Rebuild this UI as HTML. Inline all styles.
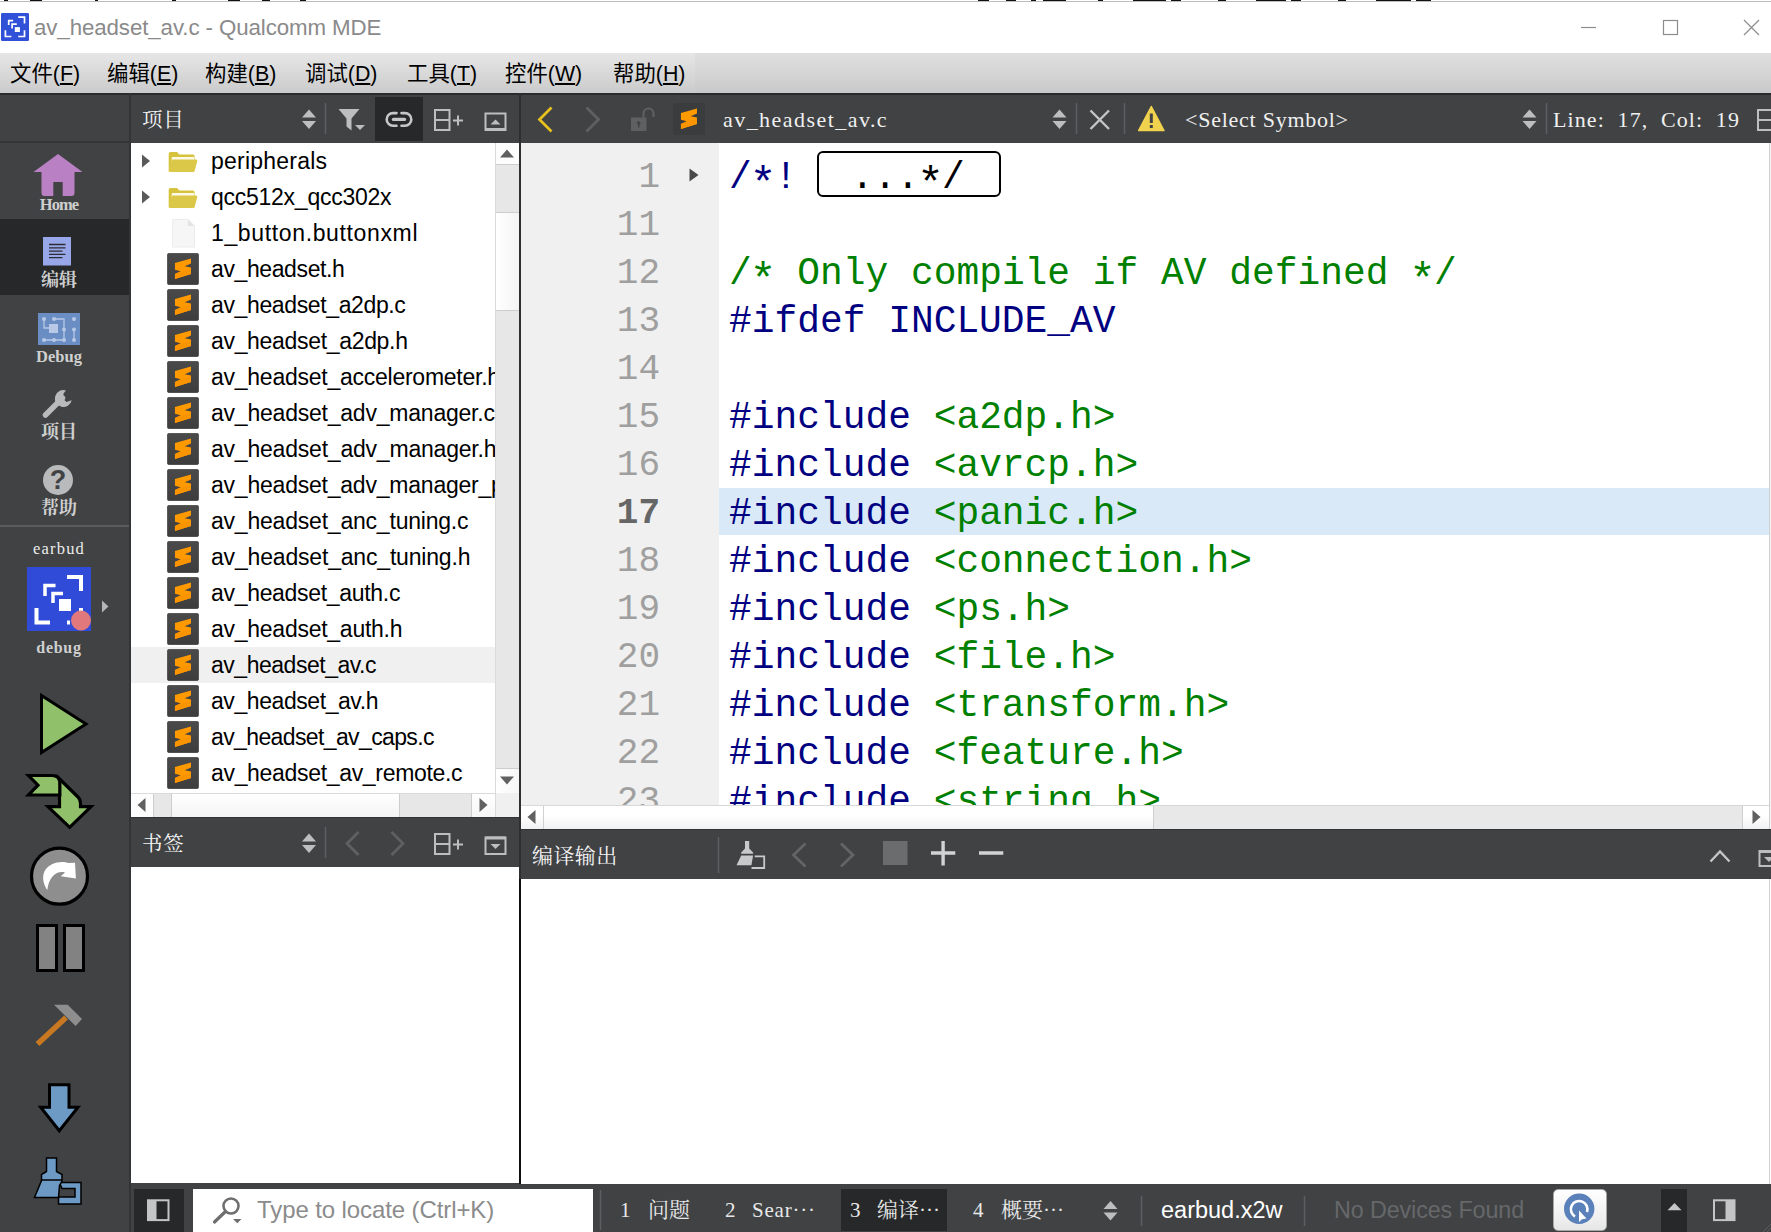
<!DOCTYPE html>
<html lang="zh-CN">
<head>
<meta charset="utf-8">
<title>av_headset_av.c - Qualcomm MDE</title>
<style>
*{box-sizing:border-box;margin:0;padding:0}
html,body{width:1771px;height:1232px;overflow:hidden;background:#fff}
body{position:relative;font-family:"Liberation Sans","Noto Sans CJK SC",sans-serif;color:#000}
.abs,.abs-all *{position:absolute}
#root{position:absolute;left:0;top:0;width:1771px;height:1232px;overflow:hidden}
#root div,#root span,#root svg{position:absolute}
.dark{background:#404244}
.sel{background:#262829}
.serif{font-family:"Liberation Serif","Noto Serif CJK SC",serif}
.cjkserif{font-family:"Liberation Serif","Noto Serif CJK SC",serif}
.nowrap{white-space:nowrap}
.sbl{left:0;width:118px;text-align:center;line-height:22px;color:#cfcfcf;white-space:nowrap}
.etxt{top:14px;font-size:22px;line-height:26px;color:#f0f0f0;white-space:nowrap}
.stx{top:11px;line-height:30px;color:#e8e8e8;white-space:nowrap}
.hdr{font-size:20.500px;line-height:26px;color:#f4f4f4;white-space:nowrap;letter-spacing:0.700px}
/* title */
#titlebar{left:0;top:0;width:1771px;height:53px;background:#fff}
#title{left:34px;top:14px;font-size:22.3px;line-height:28px;color:#8a8a8a;white-space:nowrap;letter-spacing:-0.1px}
/* menu */
#menubar{left:0;top:53px;width:1771px;height:40px;background:linear-gradient(#dfdfdf,#d6d6d6 45%,#c9c9c9)}
.menu{top:6px;font-size:21.4px;line-height:30px;white-space:nowrap;color:#000}
/* dark chrome */
#chrome{left:0;top:93px;width:1771px;height:1139px;background:#404244}
/* tree */
#tree{left:131px;top:143px;width:364px;height:650px;background:#fff;overflow:hidden}
.row{left:0;width:364px;height:36px}
.row .t{left:80px;top:3px;font-size:23px;line-height:30px;white-space:nowrap;color:#000}
/* editor */
#gutter{left:521px;top:143px;width:198px;height:662px;background:#f0f0f0;overflow:hidden}
#code{left:719px;top:143px;width:1050px;height:662px;background:#fff;overflow:hidden}
.ln{right:59px;width:120px;text-align:right;font-family:"Liberation Mono",monospace;font-size:36px;line-height:48px;height:48px;color:#9f9f9f;white-space:nowrap}
.cl{left:10px;font-family:"Liberation Mono",monospace;font-size:37.9px;line-height:48px;height:48px;white-space:pre;color:#000080}
.g{color:#008000;position:static!important}
.ast{position:relative!important;top:9.500px;left:-2.200px;font-size:45px;line-height:0;letter-spacing:-4.270px}
</style>
</head>
<body>
<div id="root">
<svg width="0" height="0" style="left:0;top:0"><defs>
 <g id="updown"><path d="M0 8.500h14l-7-8z" fill="#bdbebf"/><path d="M0 12h14l-7 8z" fill="#bdbebf"/></g>
 <g id="split" fill="none" stroke="#bdbebf" stroke-width="2"><rect x="1" y="1" width="14.500" height="20"/><path d="M1 11h14.500"/><path d="M19 11.500h10M24 6.500v10"/></g>
 <g id="folder"><path d="M1.700 3.600a1.500 1.500 0 0 1 1.500-1.500h6.800l2.400 2.400h13.600a1.500 1.500 0 0 1 1.500 1.500v14.500H1.700z" fill="#d6c23c"/><path d="M5 7h22v6H4z" fill="#fdfbe8"/><path d="M5.800 9.600h23.300a1.200 1.200 0 0 1 1.200 1.500l-2.600 9.700a1.600 1.600 0 0 1-1.500 1.200H3a1.300 1.300 0 0 1-1.300-1.700l2.600-9.500a1.600 1.600 0 0 1 1.500-1.200z" fill="#dcc848"/></g>
 <g id="fileic"><path d="M0.500 0.500h15.500l6.500 6.500v21H0.500z" fill="#f6f6f6" stroke="#ececec"/><path d="M16 0.500v6.500h6.500z" fill="#e3e3e3"/></g>
 <g id="sshape"><path d="M24 5.500L7.950 9.900V16.700L13.800 18.350 7.950 20.900V26L24 21.100V14.600L17.700 13.300 24 10.550z" fill="#ff9900"/><path d="M13.800 18.350L24 16.200v4.900L7.950 26V20.900z" fill="#fa9400"/></g>
 <linearGradient id="sbg" x1="0" y1="0" x2="0" y2="1"><stop offset="0" stop-color="#4a4a4a"/><stop offset="1" stop-color="#3d3d3d"/></linearGradient>
 <g id="sic"><rect x="0.300" y="0.300" width="31.400" height="31.400" rx="2" fill="url(#sbg)" stroke="#383838" stroke-width="0.600"/><use href="#sshape"/></g>
</defs></svg>
<!-- TITLEBAR -->
<div id="titlebar">
 <div style="left:0;top:1px;width:1771px;height:1px;background:#bdbdbd"></div>
 <div style="left:978px;top:0;width:11px;height:1.300px;background:#111"></div><div style="left:1006px;top:0;width:10px;height:1.300px;background:#111"></div><div style="left:1031px;top:0;width:5px;height:1.300px;background:#111"></div><div style="left:1043px;top:0;width:23px;height:1.300px;background:#111"></div><div style="left:1098px;top:0;width:5px;height:1.300px;background:#111"></div><div style="left:1133px;top:0;width:33px;height:1.300px;background:#111"></div><div style="left:1171px;top:0;width:10px;height:1.300px;background:#111"></div><div style="left:1218px;top:0;width:8px;height:1.300px;background:#111"></div><div style="left:1256px;top:0;width:30px;height:1.300px;background:#111"></div><div style="left:1291px;top:0;width:10px;height:1.300px;background:#111"></div><div style="left:1338px;top:0;width:8px;height:1.300px;background:#111"></div><div style="left:1376px;top:0;width:35px;height:1.300px;background:#111"></div><div style="left:1416px;top:0;width:15px;height:1.300px;background:#111"></div><div style="left:4px;top:0;width:4px;height:1.300px;background:#111"></div><div style="left:30px;top:0;width:12px;height:1.300px;background:#111"></div><div style="left:95px;top:0;width:3px;height:1.300px;background:#111"></div><div style="left:172px;top:0;width:4px;height:1.300px;background:#111"></div><div style="left:228px;top:0;width:12px;height:1.300px;background:#111"></div><div style="left:262px;top:0;width:8px;height:1.300px;background:#111"></div><div style="left:300px;top:0;width:6px;height:1.300px;background:#111"></div>
 <svg style="left:1px;top:13px" width="28" height="28" viewBox="0 0 28 28"><rect width="28" height="28" rx="1.300" fill="#3050d8"/><g fill="none" stroke="#fff" stroke-width="1.700"><path d="M17.200 4.200H23.500V10.500M4.400 17.300V23.500H10.400M23.500 17.300V23.500H17.200M7.700 11.900V7.700H12.100M11.100 15.600V11.100H15.800"/></g><rect x="13.800" y="14.100" width="5.100" height="4.900" fill="#fff"/></svg>
 <div id="title">av_headset_av.c - Qualcomm MDE</div>
 <svg style="left:1580px;top:18px" width="180" height="20" viewBox="0 0 180 20"><g fill="none" stroke="#8c8c8c" stroke-width="1.2"><path d="M1 9.500h15"/><rect x="83.500" y="2.500" width="14" height="14"/><path d="M164 2l15 15M179 2l-15 15"/></g></svg>
</div>
<!-- MENUBAR -->
<div id="menubar">
 <div style="left:0;top:0;width:695px;height:40px;background:linear-gradient(#e6e6e6,#dadada 45%,#cbcbcb)"></div>
 <div class="menu" style="left:10px">文件(<u>F</u>)</div>
 <div class="menu" style="left:107px">编辑(<u>E</u>)</div>
 <div class="menu" style="left:205px">构建(<u>B</u>)</div>
 <div class="menu" style="left:305px">调试(<u>D</u>)</div>
 <div class="menu" style="left:407px">工具(<u>T</u>)</div>
 <div class="menu" style="left:505px">控件(<u>W</u>)</div>
 <div class="menu" style="left:613px">帮助(<u>H</u>)</div>
</div>
<!-- CHROME -->
<div id="chrome"></div>
<div style="left:0;top:93px;width:1771px;height:1.500px;background:#2a2b2d"></div>
<!-- SIDEBAR -->
<div id="sidebar" style="left:0;top:93px;width:129px;height:1139px">
 <div style="left:0;top:48px;width:129px;height:2px;background:#333537"></div>
 <div class="sel" style="left:0;top:126px;width:129px;height:76px"></div>
 <div style="left:0;top:432px;width:129px;height:2px;background:#5a5c5e"></div>
 <svg style="left:0;top:0" width="129" height="1139" viewBox="0 93 129 1139">
  <!-- home -->
  <path d="M58 154L82.500 172H74.500V193a3 3 0 0 1-3 3H62.700V182H53.300V196H44.500a3 3 0 0 1-3-3V172H33.500z" fill="#b981c4"/>
  <!-- edit -->
  <rect x="43" y="237" width="28" height="28.500" fill="#98a7ea"/>
  <path d="M49 244.500h16.500M49 247.800h16.500M49 251.100h13.500M49 254.400h16.500M49 257.700h13.500" stroke="#2c2d30" stroke-width="1.300"/>
  <!-- debug -->
  <rect x="38" y="313" width="42" height="32" fill="#6a8dc4"/>
  <g stroke="#b7c9e6" stroke-width="1.300" fill="none"><path d="M44 319v9h7M54 319h10v21H44M74 319v2M74 330v10"/></g>
  <rect x="49" y="324" width="9" height="9" fill="#b7c9e6"/>
  <g fill="#b7c9e6"><circle cx="44" cy="319" r="2"/><circle cx="54" cy="319" r="2"/><circle cx="74" cy="319" r="2"/><circle cx="64" cy="329.500" r="2"/><circle cx="74" cy="329.500" r="2"/><circle cx="44" cy="340" r="2"/><circle cx="54" cy="340" r="2"/><circle cx="64" cy="340" r="2"/><circle cx="74" cy="340" r="2"/></g>
  <!-- wrench -->
  <path d="M45.500 415l17-17" stroke="#b9babb" stroke-width="5.500" stroke-linecap="round"/>
  <path d="M66 390.500a8.500 8.500 0 1 0 5.700 9.800l-5.200 1.700-3.800-3.600 1-5.200z" fill="#b9babb"/>
  <!-- help -->
  <circle cx="58" cy="480" r="15" fill="#b9babb"/>
  <!-- kit icon -->
  <rect x="27" y="567" width="64" height="64" fill="#2f4bd8"/>
  <g fill="none" stroke="#fff" stroke-width="4"><path d="M67 577h14v14M50 622.500H36.500V608M81 608v4M70 622.500h-3"/><path d="M45 596V585.500h10.500" stroke-width="3.500"/><path d="M53 603V593.500h10" stroke-width="3.500"/></g>
  <rect x="59" y="599" width="12" height="12" fill="#fff"/>
  <circle cx="81" cy="620.500" r="10" fill="#e0787c"/>
  <path d="M102 600.500v12l6.500-6z" fill="#b4b5b6"/>
  <!-- run -->
  <path d="M41.500 695.500L86 724 41.500 752.500z" fill="#90c06a" stroke="#000" stroke-width="3" stroke-linejoin="miter"/>
  <!-- debug run -->
  <path d="M56 775.500L78 797c2 2 2.500 3.500 2.500 6v3.700H91L69.700 827.300 48 806.700H59.500V782z" fill="#90c06a" stroke="#000" stroke-width="3.200" stroke-linejoin="miter"/>
  <path d="M28.500 775.500H52Q59.800 775.500 59.800 783.500V795H28.500L38 785.200z" fill="#90c06a" stroke="#000" stroke-width="3.200" stroke-linejoin="miter"/>
  <!-- restart -->
  <circle cx="59.500" cy="876.200" r="28" fill="#8e8e8e" stroke="#000" stroke-width="3.200"/>
  <path d="M47.300 890C40 879 42 866 57 862.500c4.500-1 8.500-.500 11 .500l7-.200.900 15.600-15.200-2.200 4.300-3.700C57 870.500 49 876 47.300 890z" fill="#fff"/>
  <!-- pause -->
  <rect x="37.500" y="925.500" width="19" height="45" fill="#828282" stroke="#000" stroke-width="3"/>
  <rect x="64.500" y="925.500" width="19" height="45" fill="#828282" stroke="#000" stroke-width="3"/>
  <!-- hammer -->
  <path d="M37.500 1044L66 1017.500" stroke="#c87820" stroke-width="5.500"/>
  <path d="M54 1004.700H67.700L82 1019l-6.400 7z" fill="#8e8e8e"/>
  <!-- download -->
  <path d="M49.500 1084.800H69v22.500H78l-18.700 23.500L40.700 1107.300H49.500z" fill="#6c9ac4" stroke="#000" stroke-width="3" stroke-linejoin="miter"/>
  <!-- clean -->
  <path d="M59.500 1182.500H81v21.500H58.500v-7H75v-8.500H62z" fill="#6c9ac4" stroke="#000" stroke-width="1.500"/>
  <path d="M46.500 1158h10v13.500l5.500 3v6.500l-2.500 4.500-1 12H34.500l7-17v-6l5-3z" fill="#6c9ac4" stroke="#000" stroke-width="1.500"/>
  <path d="M41.500 1180h20.500" stroke="#000" stroke-width="1.500"/>
 </svg>
 <div class="serif sbl" style="top:100.500px;font-weight:bold;font-size:16.500px;letter-spacing:-0.900px">Home</div>
 <div class="cjkserif sbl" style="top:175.500px;font-weight:bold;font-size:18px">编辑</div>
 <div class="serif sbl" style="top:252.500px;font-weight:bold;font-size:16.500px;letter-spacing:0">Debug</div>
 <div class="cjkserif sbl" style="top:327.500px;font-weight:bold;font-size:18px">项目</div>
 <div class="cjkserif sbl" style="top:403.500px;font-weight:bold;font-size:18px">帮助</div>
 <div class="sbl" style="top:371px;left:-1px;font-weight:bold;font-size:27px;color:#404244;line-height:32px">?</div>
 <div class="serif sbl" style="top:444.700px;font-size:16.500px;letter-spacing:1.200px;color:#ececec">earbud</div>
 <div class="serif sbl" style="top:544px;font-weight:bold;font-size:16px;letter-spacing:0.700px">debug</div>
</div>
<!-- PROJECT PANEL -->
<div id="projhead" style="left:131px;top:93px;width:388px;height:50px">
 <div class="cjkserif hdr" style="left:11px;top:14px">项目</div>
 <div class="sel" style="left:244px;top:4px;width:48px;height:44px"></div>
 <svg style="left:0;top:0" width="388" height="50" viewBox="0 0 388 50"><use href="#updown" x="171" y="16"/><path d="M194.500 10v31" stroke="#5c5e60" stroke-width="1.5"/><path d="M207.500 16h21l-8 9.500v12l-5-4v-8z" fill="#bdbebf"/><path d="M224 32h10l-5 5z" fill="#bdbebf"/><g fill="none" stroke="#c6c7c8" stroke-width="2.600" stroke-linecap="round"><path d="M265.500 20.100h-3.500a6.300 6.300 0 0 0 0 12.600h3.500M270.500 20.100h3.500a6.300 6.300 0 0 1 0 12.600h-3.500"/><path d="M262.500 26.400h11" stroke-width="3.400"/></g><use href="#split" x="303" y="16"/><g fill="none" stroke="#bdbebf" stroke-width="2"><rect x="354.500" y="20.500" width="20" height="16.500"/><path d="M354.500 36.500h20" stroke-width="3"/></g><path d="M359.500 31.500h10l-5-5z" fill="#bdbebf"/></svg>
</div>
<div id="tree">
 <div class="row" style="top:0px"><svg style="left:10px;top:11px" width="10" height="14"><path d="M1 0.500l8 6.500-8 6.500z" fill="#5a5a5a"/></svg><svg style="left:36px;top:7px" width="32" height="24"><use href="#folder"/></svg><div class="t" style="letter-spacing:0.22px">peripherals</div></div>
 <div class="row" style="top:36px"><svg style="left:10px;top:11px" width="10" height="14"><path d="M1 0.500l8 6.500-8 6.500z" fill="#5a5a5a"/></svg><svg style="left:36px;top:7px" width="32" height="24"><use href="#folder"/></svg><div class="t" style="letter-spacing:-0.26px">qcc512x_qcc302x</div></div>
 <div class="row" style="top:72px"><svg style="left:41px;top:4px" width="24" height="29"><use href="#fileic"/></svg><div class="t" style="letter-spacing:0.64px">1_button.buttonxml</div></div>
 <div class="row" style="top:108px"><svg style="left:36px;top:2px" width="32" height="32"><use href="#sic"/></svg><div class="t" style="letter-spacing:-0.39px">av_headset.h</div></div>
 <div class="row" style="top:144px"><svg style="left:36px;top:2px" width="32" height="32"><use href="#sic"/></svg><div class="t" style="letter-spacing:-0.37px">av_headset_a2dp.c</div></div>
 <div class="row" style="top:180px"><svg style="left:36px;top:2px" width="32" height="32"><use href="#sic"/></svg><div class="t" style="letter-spacing:-0.32px">av_headset_a2dp.h</div></div>
 <div class="row" style="top:216px"><svg style="left:36px;top:2px" width="32" height="32"><use href="#sic"/></svg><div class="t" style="letter-spacing:-0.25px">av_headset_accelerometer.h</div></div>
 <div class="row" style="top:252px"><svg style="left:36px;top:2px" width="32" height="32"><use href="#sic"/></svg><div class="t" style="letter-spacing:-0.22px">av_headset_adv_manager.c</div></div>
 <div class="row" style="top:288px"><svg style="left:36px;top:2px" width="32" height="32"><use href="#sic"/></svg><div class="t" style="letter-spacing:-0.21px">av_headset_adv_manager.h</div></div>
 <div class="row" style="top:324px"><svg style="left:36px;top:2px" width="32" height="32"><use href="#sic"/></svg><div class="t" style="letter-spacing:-0.22px">av_headset_adv_manager_private.h</div></div>
 <div class="row" style="top:360px"><svg style="left:36px;top:2px" width="32" height="32"><use href="#sic"/></svg><div class="t" style="letter-spacing:-0.21px">av_headset_anc_tuning.c</div></div>
 <div class="row" style="top:396px"><svg style="left:36px;top:2px" width="32" height="32"><use href="#sic"/></svg><div class="t" style="letter-spacing:-0.18px">av_headset_anc_tuning.h</div></div>
 <div class="row" style="top:432px"><svg style="left:36px;top:2px" width="32" height="32"><use href="#sic"/></svg><div class="t" style="letter-spacing:-0.31px">av_headset_auth.c</div></div>
 <div class="row" style="top:468px"><svg style="left:36px;top:2px" width="32" height="32"><use href="#sic"/></svg><div class="t" style="letter-spacing:-0.26px">av_headset_auth.h</div></div>
 <div class="row" style="top:504px;background:#f0f0f0"><svg style="left:36px;top:2px" width="32" height="32"><use href="#sic"/></svg><div class="t" style="letter-spacing:-0.48px">av_headset_av.c</div></div>
 <div class="row" style="top:540px"><svg style="left:36px;top:2px" width="32" height="32"><use href="#sic"/></svg><div class="t" style="letter-spacing:-0.43px">av_headset_av.h</div></div>
 <div class="row" style="top:576px"><svg style="left:36px;top:2px" width="32" height="32"><use href="#sic"/></svg><div class="t" style="letter-spacing:-0.62px">av_headset_av_caps.c</div></div>
 <div class="row" style="top:612px"><svg style="left:36px;top:2px" width="32" height="32"><use href="#sic"/></svg><div class="t" style="letter-spacing:-0.32px">av_headset_av_remote.c</div></div>
</div>
<div id="vsb" style="left:495px;top:143px;width:24px;height:650px;background:#e7e7e7;border-left:1px solid #dadada">
 <div style="left:0;top:0;width:23px;height:21px;background:#fdfdfd"></div><svg style="left:4px;top:6px" width="14" height="9"><path d="M0 8.500h14l-7-8z" fill="#606060"/></svg>
 <div style="left:0;top:21px;width:23px;height:1px;background:#cdcdcd"></div>
 <div style="left:0;top:69px;width:23px;height:99px;background:linear-gradient(90deg,#ffffff,#f4f4f4);border-top:1px solid #cdcdcd;border-bottom:1px solid #cdcdcd"></div>
 <div style="left:0;top:625px;width:23px;height:25px;background:linear-gradient(90deg,#ffffff,#f6f6f6);border-top:1px solid #cdcdcd"></div><svg style="left:4px;top:633px" width="14" height="9"><path d="M0 0.500h14l-7 8z" fill="#606060"/></svg>
</div>
<div id="hsb" style="left:131px;top:793px;width:388px;height:24px;background:#e7e7e7;border-top:1px solid #dadada">
 <div style="left:0;top:0;width:22px;height:23px;background:#fdfdfd"></div>
 <svg style="left:6px;top:4px" width="9" height="14"><path d="M8.500 0v14l-8-7z" fill="#606060"/></svg>
 <div style="left:22px;top:0;width:1px;height:23px;background:#cdcdcd"></div>
 <div style="left:40px;top:0;width:229px;height:23px;background:linear-gradient(#ffffff,#f4f4f4);border-left:1px solid #cdcdcd;border-right:1px solid #cdcdcd"></div>
 <div style="left:340px;top:0;width:24px;height:23px;background:linear-gradient(#ffffff,#f6f6f6);border-left:1px solid #cdcdcd"></div>
 <svg style="left:348px;top:4px" width="9" height="14"><path d="M0.500 0v14l8-7z" fill="#606060"/></svg>
 <div style="left:364px;top:-1px;width:24px;height:24px;background:#f0f0f0;border-left:1px solid #dadada"></div>
</div>
<div id="bmhead" style="left:131px;top:819px;width:388px;height:48px">
 <div class="cjkserif hdr" style="left:11px;top:12px">书签</div>
 <svg style="left:0;top:0" width="388" height="48" viewBox="0 0 388 48"><use href="#updown" x="171" y="14"/><path d="M194.500 8v31" stroke="#5c5e60" stroke-width="1.500"/><g fill="none" stroke="#5e6062" stroke-width="2.800"><path d="M227.500 13l-11.500 11.500 11.500 11.500M260.500 13l11.500 11.500-11.500 11.500"/></g><use href="#split" x="303" y="14"/><g fill="none" stroke="#bdbebf" stroke-width="2"><rect x="354.500" y="18.500" width="20" height="16.500"/><path d="M354.500 19h20" stroke-width="3"/></g><path d="M359.500 25h10l-5 5z" fill="#bdbebf"/></svg>
</div>
<div id="bm" style="left:131px;top:867px;width:388px;height:316px;background:#fff"></div>
<div style="left:129px;top:93px;width:2px;height:1139px;background:#333436"></div>
<div style="left:519px;top:93px;width:2px;height:1091px;background:#2e2f31"></div>
<div style="left:131px;top:817px;width:388px;height:1px;background:#323335"></div>
<div style="left:521px;top:829px;width:1250px;height:1px;background:#323335"></div>
<!-- EDITOR -->
<div id="edhead" style="left:521px;top:93px;width:1250px;height:50px">
 <div style="left:152px;top:10px;width:32px;height:32px;background:#3b3c3e;border-radius:3px"></div>
 <svg style="left:0;top:0" width="1250" height="50" viewBox="521 93 1250 50"><g fill="none" stroke-width="2.800"><path d="M551.500 107.500L539.500 119.500l12 12" stroke="#e8c21c"/><path d="M586.500 107.500l12 12-12 12" stroke="#5e6062"/></g><rect x="631" y="117.500" width="15.500" height="13.500" fill="#5e6062"/><path d="M643.500 117.500v-4a5 5 0 0 1 10 0v3.500" fill="none" stroke="#5e6062" stroke-width="2.200"/><circle cx="638.700" cy="123" r="1.800" fill="#404244"/><rect x="638" y="123" width="1.500" height="4.500" fill="#404244"/><use href="#sshape" x="673" y="103"/><use href="#updown" x="1052.500" y="109"/><path d="M1076.500 103v31M1124.500 103v31M1546.500 103v31" stroke="#5c5e60" stroke-width="1.500"/><path d="M1090.500 110.500l18.500 18.500M1109 110.500l-18.500 18.500" stroke="#c4c5c6" stroke-width="2.400"/><path d="M1151.300 106.500L1164 130.500H1138.600z" fill="#f0d24e" stroke="#f0d24e" stroke-width="1.500" stroke-linejoin="round"/><rect x="1149.800" y="113.500" width="3" height="9.500" fill="#404244"/><rect x="1149.800" y="125" width="3" height="3" fill="#404244"/><use href="#updown" x="1522.500" y="109"/><g fill="none" stroke="#bdbebf" stroke-width="2"><rect x="1758" y="110" width="16" height="20"/><path d="M1758 120h16"/></g></svg>
 <div class="serif etxt" style="left:202px;letter-spacing:1.450px">av_headset_av.c</div>
 <div class="serif etxt" style="left:664px;letter-spacing:0.750px">&lt;Select Symbol&gt;</div>
 <div class="serif etxt" style="left:1032px;letter-spacing:1.100px;word-spacing:6px">Line: 17, Col: 19</div>
</div>
<div id="gutter">
 <div class="ln" style="top:10.7px">1</div>
 <div class="ln" style="top:58.7px">11</div>
 <div class="ln" style="top:106.7px">12</div>
 <div class="ln" style="top:154.7px">13</div>
 <div class="ln" style="top:202.7px">14</div>
 <div class="ln" style="top:250.7px">15</div>
 <div class="ln" style="top:298.7px">16</div>
 <div class="ln" style="top:346.7px;color:#666;font-weight:bold">17</div>
 <div class="ln" style="top:394.7px">18</div>
 <div class="ln" style="top:442.7px">19</div>
 <div class="ln" style="top:490.7px">20</div>
 <div class="ln" style="top:538.7px">21</div>
 <div class="ln" style="top:586.7px">22</div>
 <div class="ln" style="top:634.7px">23</div>
 <svg style="left:168px;top:25px" width="10" height="14"><path d="M0.500 0.500v13l9-6.500z" fill="#4a4a4a"/></svg>
</div>
<div id="code">
 <div style="left:0;top:344.500px;width:1050px;height:47px;background:#d9e9f7"></div>
 <div class="cl" style="top:10.7px">/<span class="ast">*</span>! </div>
 <div class="cl" style="top:106.7px"><span class="g">/<span class="ast">*</span> Only compile if AV defined <span class="ast">*</span>/</span></div>
 <div class="cl" style="top:154.7px">#ifdef INCLUDE_AV</div>
 <div class="cl" style="top:250.7px">#include <span class="g">&lt;a2dp.h&gt;</span></div>
 <div class="cl" style="top:298.7px">#include <span class="g">&lt;avrcp.h&gt;</span></div>
 <div class="cl" style="top:346.7px">#include <span class="g">&lt;panic.h&gt;</span></div>
 <div class="cl" style="top:394.7px">#include <span class="g">&lt;connection.h&gt;</span></div>
 <div class="cl" style="top:442.7px">#include <span class="g">&lt;ps.h&gt;</span></div>
 <div class="cl" style="top:490.7px">#include <span class="g">&lt;file.h&gt;</span></div>
 <div class="cl" style="top:538.7px">#include <span class="g">&lt;transform.h&gt;</span></div>
 <div class="cl" style="top:586.7px">#include <span class="g">&lt;feature.h&gt;</span></div>
 <div class="cl" style="top:634.7px">#include <span class="g">&lt;string.h&gt;</span></div>
 <div style="left:98px;top:8px;width:184px;height:46px;border:2px solid #000;border-radius:6px"></div>
 <div class="cl" style="left:132px;top:10.7px;color:#000">...<span class="ast">*</span>/</div>
</div>
<div style="left:1769px;top:143px;width:2px;height:686px;background:#f4f4f4;border-left:1px solid #d0d0d0"></div>
<div id="ehsb" style="left:521px;top:805px;width:1248px;height:24px;background:linear-gradient(#ffffff,#ffffff 40%,#f1f1f1);border-top:1px solid #d8d8d8">
 <svg style="left:5.500px;top:4px" width="9" height="14"><path d="M8.500 0v14l-8-7z" fill="#606060"/></svg>
 <div style="left:22px;top:0;width:1px;height:23px;background:#d0d0d0"></div>
 <div style="left:632px;top:0;width:590px;height:23px;background:#e8e8e8;border-left:1px solid #cfcfcf;border-right:1px solid #cfcfcf"></div>
 <svg style="left:1231px;top:4px" width="9" height="14"><path d="M0.500 0v14l8-7z" fill="#606060"/></svg>
</div>
<!-- OUTPUT -->
<div id="outhead" style="left:521px;top:829px;width:1250px;height:50px">
 <div class="cjkserif hdr" style="left:11px;top:14px;letter-spacing:0.400px;font-size:21px">编译输出</div>
 <svg style="left:0;top:0" width="1250" height="50" viewBox="521 829 1250 50"><path d="M718.500 837v36" stroke="#5c5e60" stroke-width="1.500"/><path d="M745 841h4.200v7.600l3.900 3.800v1.300H741.200v-1.300l3.800-3.800z" fill="#c8c9ca"/><path d="M741.200 855.500h11.900l-1.700 9.700H736.500z" fill="#c8c9ca"/><path d="M754.700 856.300h9.500v11.700h-12.700" fill="none" stroke="#c8c9ca" stroke-width="1.800"/><g fill="none" stroke="#626466" stroke-width="2.800"><path d="M805.500 843.500L793.500 855l12 11.500M841 843.500l12 11.500-12 11.500"/></g><rect x="883" y="841" width="24.500" height="24" fill="#6b6c6e"/><path d="M931 853h24.300M943.100 841v24.500M979 853h24.300" stroke="#d2d3d4" stroke-width="3.400"/><path d="M1710.500 861.500l9.500-10 9.500 10" fill="none" stroke="#c4c5c6" stroke-width="2.400"/><g fill="none" stroke="#bdbebf" stroke-width="2"><rect x="1759.500" y="851" width="20" height="15"/><path d="M1759.500 851.500h20" stroke-width="3"/></g><path d="M1764 857h10l-5 5z" fill="#bdbebf"/></svg>
</div>
<div id="outbody" style="left:521px;top:879px;width:1248px;height:305px;background:#fff"></div>
<div style="left:1769px;top:879px;width:2px;height:305px;background:#fff;border-left:1px solid #d0d0d0"></div>
<div style="left:519px;top:879px;width:2px;height:305px;background:#101010"></div>
<!-- STATUSBAR -->
<div id="status" style="left:131px;top:1184px;width:1640px;height:48px">
 <div class="sel" style="left:3px;top:5px;width:50px;height:43px"></div>
 <div style="left:62px;top:5px;width:400px;height:43px;background:#fff"></div>
 <div class="sel" style="left:710px;top:5px;width:106px;height:42px"></div>
 <div class="sel" style="left:1530px;top:5px;width:26px;height:42.500px"></div>
 <div style="left:1422px;top:5px;width:54px;height:42px;border:1.500px solid #a8a8a8;border-radius:5px;background:linear-gradient(#ffffff,#f2f2f2 60%,#e6e6e6)"></div>
 <svg style="left:0;top:0" width="1640" height="48" viewBox="131 1184 1640 48"><rect x="148" y="1200.300" width="20.500" height="19.800" fill="none" stroke="#c4c5c6" stroke-width="2"/><rect x="148" y="1200.300" width="8.500" height="19.800" fill="#c4c5c6"/><circle cx="231" cy="1206" r="7.500" fill="none" stroke="#6e6e6e" stroke-width="2.600"/><path d="M225.500 1211.500l-11 10.500" stroke="#6e6e6e" stroke-width="3.200" stroke-linecap="round"/><path d="M233 1219h8.500l-4.200 4.200z" fill="#6e6e6e"/><path d="M600.500 1190v40M1141.500 1196v30M1304.500 1196v30" stroke="#5c5e60" stroke-width="1.500"/><use href="#updown" x="1103.500" y="1200.500"/><circle cx="1579.200" cy="1208.800" r="15.200" fill="#5b81ba"/><path d="M1575 1216.500a8.300 8.300 0 1 1 12-4.500" fill="none" stroke="#fff" stroke-width="2.600"/><path d="M1579 1210.500v11.500l3-2.700 4.500-.800z" fill="#fff"/><path d="M1667.500 1210.300h14l-7-7.400z" fill="#c6c7c8"/><path d="M1771 1224l-8 8M1771 1228l-4 4" stroke="#5a5c5e" stroke-width="1"/><rect x="1714" y="1200.300" width="20.500" height="19.800" fill="none" stroke="#c4c5c6" stroke-width="2"/><rect x="1725.500" y="1200.300" width="9" height="19.800" fill="#c4c5c6"/></svg>
 <div class="stx" style="left:126px;color:#8c8c8c;font-size:24px;letter-spacing:-0.100px">Type to locate (Ctrl+K)</div>
 <div class="cjkserif stx" style="left:489px;font-size:21px">1</div><div class="cjkserif stx" style="left:517px;font-size:21px">问题</div>
 <div class="cjkserif stx" style="left:594px;font-size:21px">2</div><div class="cjkserif stx" style="left:621px;font-size:21px;letter-spacing:0.800px">Sear···</div>
 <div class="cjkserif stx" style="left:719px;font-size:21px">3</div><div class="cjkserif stx" style="left:746px;font-size:21px">编译···</div>
 <div class="cjkserif stx" style="left:842px;font-size:21px">4</div><div class="cjkserif stx" style="left:870px;font-size:21px">概要···</div>
 <div class="stx" style="left:1030px;font-size:23.500px;color:#fff">earbud.x2w</div>
 <div class="stx" style="left:1203px;font-size:23.300px;color:#66686a;letter-spacing:-0.100px">No Devices Found</div>
</div>
</div>
</body>
</html>
